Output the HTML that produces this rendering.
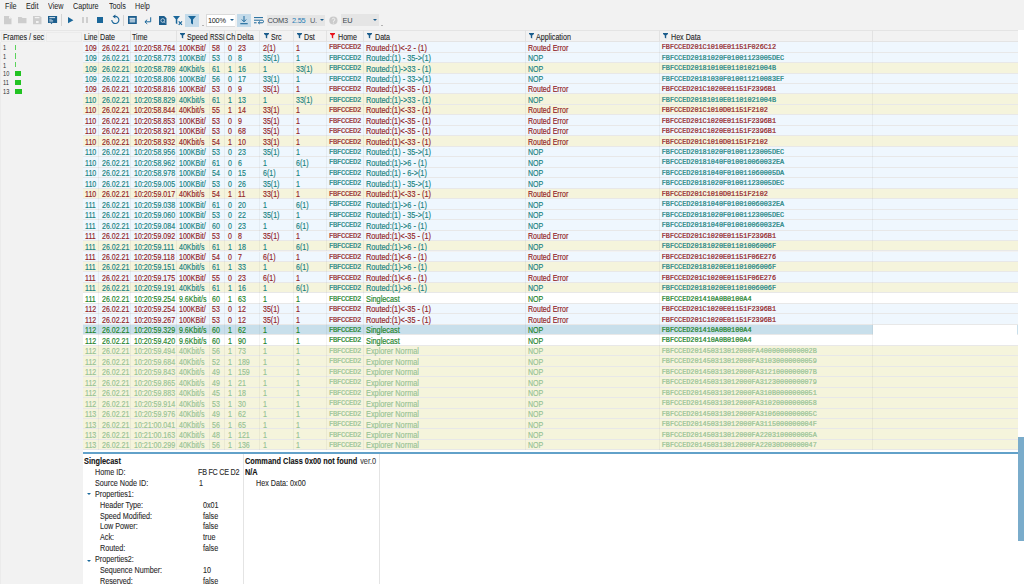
<!DOCTYPE html><html><head><meta charset="utf-8"><style>
html,body{margin:0;padding:0}
body{width:1024px;height:584px;overflow:hidden;background:#f2f2f2;position:relative;font-family:"Liberation Sans",sans-serif;color:#1e1e1e}
.a{position:absolute}
.menu{position:absolute;top:2.4px;font-size:8.4px;letter-spacing:0;line-height:9px;color:#1a1a1a;transform:scaleX(.86);transform-origin:0 0}
.tb svg{position:absolute;overflow:visible}
.tbl{position:absolute;left:82.5px;top:0;width:935px;height:584px}
.row{position:absolute;left:0;width:935px;height:10.47px;box-shadow:inset 0 -1px 0 #e8e8e8}
.c{position:absolute;top:0;height:10.47px;box-sizing:border-box;padding-left:2.4px;padding-top:1.5px;font-size:8.2px;letter-spacing:0;line-height:10.47px;white-space:nowrap;overflow:hidden;box-shadow:inset -1px 0 0 rgba(0,0,0,.045);-webkit-text-stroke:.16px currentColor}
.c>span{display:inline-block;transform:scaleX(.86);transform-origin:0 0}
.c.m>span{transform:none}
.c.d>span{transform:scaleX(.895)}
.c.m{font-family:"Liberation Mono",monospace;font-size:6.8px;letter-spacing:0;font-weight:normal;-webkit-text-stroke:.22px currentColor;padding-top:.2px;padding-left:1.6px}
.c.d{letter-spacing:0;padding-left:1.7px}
.c.m.h{-webkit-text-stroke:.2px currentColor;font-size:7.1px;letter-spacing:-0.27px}
.B{background:#eff7fe}
.Y{background:#f5f4dc}
.W{background:#ffffff}
.S{background:#c8dfeb}
.S .c:last-child{background:#fff}
.row .c:last-child{box-shadow:none}
.R{color:#932427}
.T{color:#198281}
.G{color:#22832a}
.F{color:#98c395}
.hdr{position:absolute;top:30px;height:12px;background:#f2f2f2;box-shadow:inset 0 1px 0 #e4e4e4, inset 0 -1px 0 #e4e4e4}
.hc{position:absolute;top:0;height:12px;box-sizing:border-box;font-size:8.2px;letter-spacing:0;-webkit-text-stroke:.1px currentColor;line-height:12px;padding-left:1px;padding-top:1.7px;white-space:nowrap;overflow:hidden;color:#1e1e1e;box-shadow:inset -1px 0 0 #e2e2e2}
.fi{display:inline-block;vertical-align:top;margin-top:1.7px}
.lp{position:absolute;left:0;top:30px;width:82.5px;height:554px;background:#f0f0f0}
.lrow{position:absolute;left:3.2px;margin-top:.8px;font-size:6.4px;line-height:8px;color:#2e2e2e;transform:scaleX(.88);transform-origin:0 0}
.bar{position:absolute;background:#22c322}
.det{position:absolute;left:82.5px;top:454px;width:935px;height:130px;background:#fff}
.dt{position:absolute;margin-top:.6px;font-size:8.2px;letter-spacing:0;transform:scaleX(.88);transform-origin:0 0;line-height:9px;color:#2a2a2a;white-space:nowrap;-webkit-text-stroke:.1px currentColor}
.dt.b{font-weight:bold;color:#111;transform:scaleX(.9)}

.hc>span{display:inline-block;transform:scaleX(.87);transform-origin:0 0;white-space:nowrap}

</style></head><body>
<div class="menu" style="left:5px">File</div>
<div class="menu" style="left:26.2px">Edit</div>
<div class="menu" style="left:47.8px">View</div>
<div class="menu" style="left:72.9px">Capture</div>
<div class="menu" style="left:109px">Tools</div>
<div class="menu" style="left:135.4px">Help</div>
<div class="a" style="left:0;top:30px;width:1024px;height:1px;background:#e6e6e6"></div>
<div class="tb">
<!-- new doc -->
<svg style="left:4px;top:16px" width="8" height="9" viewBox="0 0 8 9"><path d="M0 0H5L7.5 2.5V8.3H0Z" fill="#cdcdcd"/><path d="M5 0V2.5H7.5" fill="#f4f4f4"/></svg>
<!-- folder -->
<svg style="left:18px;top:17px" width="9" height="7" viewBox="0 0 9 7"><path d="M0 0H3.5L4.5 1H8.5V6.2H0Z" fill="#cdcdcd"/></svg>
<!-- save -->
<svg style="left:33px;top:16px" width="9" height="9" viewBox="0 0 9 9"><path d="M0 0H7L8.5 1.5V8.3H0Z" fill="#cdcdcd"/><rect x="1.8" y="1" width="4.6" height="1.2" fill="#f2f2f2"/><rect x="3" y="5" width="2.6" height="2" fill="#f2f2f2"/></svg>
<!-- message -->
<svg style="left:47.8px;top:15.8px" width="10" height="10" viewBox="0 0 10 10"><path d="M0 0H9.1V7H4.4L3.5 8.3L2.6 7H0Z" fill="#1c5d8c"/><rect x="1.3" y="1.2" width="5.8" height="0.9" fill="#eef3f7"/><rect x="1.3" y="2.9" width="2.4" height="0.8" fill="#aac4d8"/><rect x="1.3" y="4.2" width="3.8" height="0.8" fill="#aac4d8"/><rect x="1.3" y="5.4" width="3.8" height="0.8" fill="#aac4d8"/></svg>
<div class="a" style="left:60.6px;top:14px;width:1px;height:12px;background:#d4d4d4"></div>
<!-- play -->
<svg style="left:67.8px;top:17px" width="6" height="7" viewBox="0 0 6 7"><path d="M0 0L5.4 3.15L0 6.3Z" fill="#1b679a"/></svg>
<!-- pause -->
<div class="a" style="left:82px;top:17px;width:1.6px;height:6px;background:#cfcfcf"></div>
<div class="a" style="left:86px;top:17px;width:1.6px;height:6px;background:#cfcfcf"></div>
<!-- stop -->
<div class="a" style="left:97px;top:17.4px;width:5.5px;height:5.6px;background:#1b679a"></div>
<!-- refresh -->
<svg style="left:110px;top:14px" width="10" height="10" viewBox="0 0 10 10"><path d="M1.8 6A3.55 3.55 0 1 0 5.1 2.45" fill="none" stroke="#1b679a" stroke-width="1.15"/><path d="M2.6 2.45L5.4 0.5V4.4Z" fill="#1b5d8c"/></svg>
<div class="a" style="left:123px;top:14.6px;width:1px;height:11px;background:#d4d4d4"></div>
<!-- window -->
<svg style="left:128px;top:16px" width="9" height="8" viewBox="0 0 9 8"><rect x="0" y="0" width="8.8" height="8" fill="#1c5d8c"/><rect x="1.6" y="1.9" width="5.6" height="4.6" fill="#a3bfd4"/><rect x="1.6" y="1.9" width="5.6" height="0.7" fill="#e9f0f5"/></svg>
<!-- enter -->
<svg style="left:143.5px;top:16.5px" width="8" height="8" viewBox="0 0 8 8"><path d="M6.7 0.3V4.8H1" fill="none" stroke="#1b679a" stroke-width="1"/><path d="M3.2 2.7L0.9 4.8L3.2 6.9" fill="none" stroke="#1b679a" stroke-width="1"/></svg>
<!-- doc search -->
<svg style="left:158.5px;top:15.8px" width="8" height="9" viewBox="0 0 8 9"><path d="M0 0H5.2L7.5 2.3V9H0Z" fill="#1c5d8c"/><circle cx="3.75" cy="4.5" r="1.85" fill="none" stroke="#e8eff5" stroke-width="0.75"/><circle cx="3.75" cy="4.5" r="0.7" fill="#1c5d8c"/><path d="M4.9 5.7L6.3 7.2" stroke="#e8eff5" stroke-width="0.6"/></svg>
<!-- filter x -->
<svg style="left:172.7px;top:15.8px" width="10" height="10" viewBox="0 0 10 10"><path d="M0 0H7L4.3 3.2V8.2L2.8 7.3V3.2Z" fill="#1b679a"/><path d="M5.7 5.3L9 8.8M9 5.3L5.7 8.8" stroke="#1b679a" stroke-width="1.15"/></svg>
<!-- filter active -->
<div class="a" style="left:184.8px;top:13.5px;width:14.2px;height:13.2px;background:#c4dbea"></div>
<svg style="left:188px;top:16px" width="8" height="9" viewBox="0 0 8 9"><path d="M0 0H8L5 3.5V8.5L3 7.2V3.5Z" fill="#1b679a"/></svg>
<div class="a" style="left:202.3px;top:25px;width:0;height:0;border-left:1.3px solid transparent;border-right:1.3px solid transparent;border-top:1.3px solid #777"></div>
<!-- zoom combobox -->
<div class="a" style="left:206.2px;top:13.5px;width:29.3px;height:13.2px;background:#dadada"></div>
<div class="a" style="left:207px;top:14.6px;width:28px;height:11px;background:#fff"></div>
<div class="a" style="left:208px;top:15.6px;font-size:7.3px;letter-spacing:-0.25px;line-height:10px;color:#222">100%</div>
<div class="a" style="left:230px;top:19.2px;width:0;height:0;border-left:2px solid transparent;border-right:2px solid transparent;border-top:2px solid #1b5d8c"></div>
<!-- scroll to end active -->
<div class="a" style="left:236.6px;top:13.5px;width:14.1px;height:13.2px;background:#c4dbea"></div>
<svg style="left:239.5px;top:16px" width="8" height="9" viewBox="0 0 8 9"><path d="M4 0V5.5" stroke="#1b679a" stroke-width="1"/><path d="M1.8 3.5L4 5.8L6.2 3.5" fill="none" stroke="#1b679a" stroke-width="1"/><path d="M0.3 7.7H7.7" stroke="#1b679a" stroke-width="1.1"/></svg>
<!-- wrap -->
<svg style="left:254px;top:17px" width="10" height="7" viewBox="0 0 10 7"><path d="M0 0.6H9M0 3.2H8.2A1.3 1.3 0 0 1 8.2 5.8H4.6M0 5.8H2.6" fill="none" stroke="#1b679a" stroke-width="1"/><path d="M5.8 4.4L4.2 5.8L5.8 7" fill="none" stroke="#1b679a" stroke-width="0.9"/></svg>
<!-- COM box -->
<div class="a" style="left:266.7px;top:14.6px;width:58.3px;height:11px;background:#e5e5e5"></div>
<div class="a" style="left:267.5px;top:15.8px;font-size:7.4px;letter-spacing:-0.25px;line-height:10px;color:#3e4750;white-space:nowrap">COM3</div>
<div class="a" style="left:292px;top:15.8px;font-size:7.4px;letter-spacing:-0.25px;line-height:10px;color:#2a7db5">2.55</div>
<div class="a" style="left:310px;top:15.8px;font-size:7.4px;letter-spacing:-0.25px;line-height:10px;color:#5a6068">U.</div>
<div class="a" style="left:320px;top:19.2px;width:0;height:0;border-left:2px solid transparent;border-right:2px solid transparent;border-top:2px solid #1b5d8c"></div>
<!-- help -->
<svg style="left:329px;top:16px" width="9" height="9" viewBox="0 0 9 9"><circle cx="4.4" cy="4.5" r="4.1" fill="#cbcbcb"/><path d="M3.1 3.4A1.35 1.35 0 1 1 4.4 5V5.8" fill="none" stroke="#f4f4f4" stroke-width="0.9"/><circle cx="4.4" cy="7" r="0.55" fill="#f4f4f4"/></svg>
<!-- EU box -->
<div class="a" style="left:341.3px;top:13.9px;width:37.5px;height:11.7px;background:#e5e5e5"></div>
<div class="a" style="left:342.5px;top:15.8px;font-size:7.4px;letter-spacing:-0.25px;line-height:10px;color:#3e4750">EU</div>
<div class="a" style="left:373px;top:19.2px;width:0;height:0;border-left:2px solid transparent;border-right:2px solid transparent;border-top:2px solid #1b5d8c"></div>
<div class="a" style="left:381.2px;top:25px;width:0;height:0;border-left:1.3px solid transparent;border-right:1.3px solid transparent;border-top:1.3px solid #777"></div>
</div>
<!-- left panel -->
<div class="a" style="left:0;top:42px;width:1px;height:542px;background:#ebebeb"></div>
<div class="a" style="left:1px;top:31.5px;width:43.5px;height:10.5px;background:#f2f2f2;box-shadow:inset 0 0 0 1px #ebebeb"></div>
<div class="a" style="left:45.5px;top:31.5px;width:36px;height:10.5px;background:#f2f2f2;box-shadow:inset 0 0 0 1px #ebebeb"></div>
<div class="a" style="left:3.2px;top:32.9px;font-size:8.2px;letter-spacing:0;line-height:10px;color:#1e1e1e;-webkit-text-stroke:.08px currentColor;transform:scaleX(.87);transform-origin:0 0">Frames / sec</div>
<div class="lrow" style="top:43.2px">1</div><div class="bar" style="left:15.1px;top:44.9px;width:1px;height:5px;background:#5bd35b"></div>
<div class="lrow" style="top:52px">1</div><div class="bar" style="left:15.1px;top:53.4px;width:1px;height:5.4px;background:#5bd35b"></div>
<div class="lrow" style="top:60.9px">1</div><div class="bar" style="left:15.1px;top:62.4px;width:1px;height:5px;background:#5bd35b"></div>
<div class="lrow" style="top:69.7px">10</div><div class="bar" style="left:15.3px;top:71px;width:5.6px;height:5px"></div>
<div class="lrow" style="top:78.6px">11</div><div class="bar" style="left:15.3px;top:79.9px;width:5.9px;height:5.2px"></div>
<div class="lrow" style="top:87.4px">13</div><div class="bar" style="left:15.3px;top:88.7px;width:7.2px;height:5.5px"></div>

<div class="hdr" style="left:82.5px;width:935px">
<div class="hc" style="left:0.00px;width:16.80px"><span>Line</span></div>
<div class="hc" style="left:16.80px;width:32.00px"><span>Date</span></div>
<div class="hc" style="left:48.80px;width:45.40px"><span>Time</span></div>
<div class="hc" style="left:94.20px;width:33.20px"><svg class="fi" width="5" height="6" viewBox="0 0 5 6" style="margin-left:2px;margin-right:2.6px"><path d="M0 0H5V1L3.2 2.6V5.6L1.8 4.8V2.6L0 1Z" fill="#1b5d8c"/></svg><span>Speed</span></div>
<div class="hc" style="left:127.40px;width:15.30px;padding-left:0.5px;overflow:visible"><span style="transform:scaleX(.76)">RSSI</span></div>
<div class="hc" style="left:142.70px;width:10.90px"><span>Ch</span></div>
<div class="hc" style="left:153.60px;width:24.40px"><span>Delta</span></div>
<div class="hc" style="left:178.00px;width:33.20px"><svg class="fi" width="5" height="6" viewBox="0 0 5 6" style="margin-left:2px;margin-right:2.6px"><path d="M0 0H5V1L3.2 2.6V5.6L1.8 4.8V2.6L0 1Z" fill="#1b5d8c"/></svg><span>Src</span></div>
<div class="hc" style="left:211.20px;width:33.70px"><svg class="fi" width="5" height="6" viewBox="0 0 5 6" style="margin-left:2px;margin-right:2.6px"><path d="M0 0H5V1L3.2 2.6V5.6L1.8 4.8V2.6L0 1Z" fill="#1b5d8c"/></svg><span>Dst</span></div>
<div class="hc" style="left:244.90px;width:36.80px"><svg class="fi" width="5" height="6" viewBox="0 0 5 6" style="margin-left:2px;margin-right:2.6px"><path d="M0 0H5V1L3.2 2.6V5.6L1.8 4.8V2.6L0 1Z" fill="#e8121a"/></svg><span>Home</span></div>
<div class="hc" style="left:281.70px;width:161.40px"><svg class="fi" width="5" height="6" viewBox="0 0 5 6" style="margin-left:2px;margin-right:2.6px"><path d="M0 0H5V1L3.2 2.6V5.6L1.8 4.8V2.6L0 1Z" fill="#1b5d8c"/></svg><span>Data</span></div>
<div class="hc" style="left:443.10px;width:134.60px"><svg class="fi" width="5" height="6" viewBox="0 0 5 6" style="margin-left:2px;margin-right:2.6px"><path d="M0 0H5V1L3.2 2.6V5.6L1.8 4.8V2.6L0 1Z" fill="#1b5d8c"/></svg><span>Application</span></div>
<div class="hc" style="left:577.70px;width:213.20px"><svg class="fi" width="5" height="6" viewBox="0 0 5 6" style="margin-left:2px;margin-right:2.6px"><path d="M0 0H5V1L3.2 2.6V5.6L1.8 4.8V2.6L0 1Z" fill="#1b5d8c"/></svg><span>Hex Data</span></div>
<div class="hc" style="left:790.90px;width:144.10px;box-shadow:none"><span></span></div>
</div>
<div class="tbl">
<div class="row B R" style="top:42.100px">
<div class="c" style="left:0.00px;width:16.80px"><span>109</span></div>
<div class="c" style="left:16.80px;width:32.00px"><span>26.02.21</span></div>
<div class="c" style="left:48.80px;width:45.40px"><span>10:20:58.764</span></div>
<div class="c" style="left:94.20px;width:33.20px"><span>100KBit/</span></div>
<div class="c" style="left:127.40px;width:15.30px"><span>58</span></div>
<div class="c" style="left:142.70px;width:10.90px"><span>0</span></div>
<div class="c" style="left:153.60px;width:24.40px"><span>23</span></div>
<div class="c" style="left:178.00px;width:33.20px"><span>2(1)</span></div>
<div class="c" style="left:211.20px;width:33.70px"><span>1</span></div>
<div class="c m h" style="left:244.90px;width:36.80px"><span>FBFCCED2</span></div>
<div class="c d" style="left:281.70px;width:161.40px"><span>Routed:(1)&lt;-2 - (1)</span></div>
<div class="c" style="left:443.10px;width:134.60px"><span>Routed Error</span></div>
<div class="c m" style="left:577.70px;width:213.20px"><span>FBFCCED201C1010E01151F026C12</span></div>
<div class="c" style="left:790.90px;width:144.10px"></div>
</div>
<div class="row B T" style="top:52.570px">
<div class="c" style="left:0.00px;width:16.80px"><span>109</span></div>
<div class="c" style="left:16.80px;width:32.00px"><span>26.02.21</span></div>
<div class="c" style="left:48.80px;width:45.40px"><span>10:20:58.773</span></div>
<div class="c" style="left:94.20px;width:33.20px"><span>100KBit/</span></div>
<div class="c" style="left:127.40px;width:15.30px"><span>53</span></div>
<div class="c" style="left:142.70px;width:10.90px"><span>0</span></div>
<div class="c" style="left:153.60px;width:24.40px"><span>8</span></div>
<div class="c" style="left:178.00px;width:33.20px"><span>35(1)</span></div>
<div class="c" style="left:211.20px;width:33.70px"><span>1</span></div>
<div class="c m h" style="left:244.90px;width:36.80px"><span>FBFCCED2</span></div>
<div class="c d" style="left:281.70px;width:161.40px"><span>Routed:(1) - 35-&gt;(1)</span></div>
<div class="c" style="left:443.10px;width:134.60px"><span>NOP</span></div>
<div class="c m" style="left:577.70px;width:213.20px"><span>FBFCCED20181020F01001123005DEC</span></div>
<div class="c" style="left:790.90px;width:144.10px"></div>
</div>
<div class="row Y T" style="top:63.040px">
<div class="c" style="left:0.00px;width:16.80px"><span>109</span></div>
<div class="c" style="left:16.80px;width:32.00px"><span>26.02.21</span></div>
<div class="c" style="left:48.80px;width:45.40px"><span>10:20:58.789</span></div>
<div class="c" style="left:94.20px;width:33.20px"><span>40Kbit/s</span></div>
<div class="c" style="left:127.40px;width:15.30px"><span>61</span></div>
<div class="c" style="left:142.70px;width:10.90px"><span>1</span></div>
<div class="c" style="left:153.60px;width:24.40px"><span>16</span></div>
<div class="c" style="left:178.00px;width:33.20px"><span>1</span></div>
<div class="c" style="left:211.20px;width:33.70px"><span>33(1)</span></div>
<div class="c m h" style="left:244.90px;width:36.80px"><span>FBFCCED2</span></div>
<div class="c d" style="left:281.70px;width:161.40px"><span>Routed:(1)-&gt;33 - (1)</span></div>
<div class="c" style="left:443.10px;width:134.60px"><span>NOP</span></div>
<div class="c m" style="left:577.70px;width:213.20px"><span>FBFCCED20181010E01101021004B</span></div>
<div class="c" style="left:790.90px;width:144.10px"></div>
</div>
<div class="row B T" style="top:73.510px">
<div class="c" style="left:0.00px;width:16.80px"><span>109</span></div>
<div class="c" style="left:16.80px;width:32.00px"><span>26.02.21</span></div>
<div class="c" style="left:48.80px;width:45.40px"><span>10:20:58.806</span></div>
<div class="c" style="left:94.20px;width:33.20px"><span>100KBit/</span></div>
<div class="c" style="left:127.40px;width:15.30px"><span>56</span></div>
<div class="c" style="left:142.70px;width:10.90px"><span>0</span></div>
<div class="c" style="left:153.60px;width:24.40px"><span>17</span></div>
<div class="c" style="left:178.00px;width:33.20px"><span>33(1)</span></div>
<div class="c" style="left:211.20px;width:33.70px"><span>1</span></div>
<div class="c m h" style="left:244.90px;width:36.80px"><span>FBFCCED2</span></div>
<div class="c d" style="left:281.70px;width:161.40px"><span>Routed:(1) - 33-&gt;(1)</span></div>
<div class="c" style="left:443.10px;width:134.60px"><span>NOP</span></div>
<div class="c m" style="left:577.70px;width:213.20px"><span>FBFCCED20181030F010011210083EF</span></div>
<div class="c" style="left:790.90px;width:144.10px"></div>
</div>
<div class="row B R" style="top:83.980px">
<div class="c" style="left:0.00px;width:16.80px"><span>109</span></div>
<div class="c" style="left:16.80px;width:32.00px"><span>26.02.21</span></div>
<div class="c" style="left:48.80px;width:45.40px"><span>10:20:58.816</span></div>
<div class="c" style="left:94.20px;width:33.20px"><span>100KBit/</span></div>
<div class="c" style="left:127.40px;width:15.30px"><span>53</span></div>
<div class="c" style="left:142.70px;width:10.90px"><span>0</span></div>
<div class="c" style="left:153.60px;width:24.40px"><span>9</span></div>
<div class="c" style="left:178.00px;width:33.20px"><span>35(1)</span></div>
<div class="c" style="left:211.20px;width:33.70px"><span>1</span></div>
<div class="c m h" style="left:244.90px;width:36.80px"><span>FBFCCED2</span></div>
<div class="c d" style="left:281.70px;width:161.40px"><span>Routed:(1)&lt;-35 - (1)</span></div>
<div class="c" style="left:443.10px;width:134.60px"><span>Routed Error</span></div>
<div class="c m" style="left:577.70px;width:213.20px"><span>FBFCCED201C1020E01151F2396B1</span></div>
<div class="c" style="left:790.90px;width:144.10px"></div>
</div>
<div class="row Y T" style="top:94.450px">
<div class="c" style="left:0.00px;width:16.80px"><span>110</span></div>
<div class="c" style="left:16.80px;width:32.00px"><span>26.02.21</span></div>
<div class="c" style="left:48.80px;width:45.40px"><span>10:20:58.829</span></div>
<div class="c" style="left:94.20px;width:33.20px"><span>40Kbit/s</span></div>
<div class="c" style="left:127.40px;width:15.30px"><span>61</span></div>
<div class="c" style="left:142.70px;width:10.90px"><span>1</span></div>
<div class="c" style="left:153.60px;width:24.40px"><span>13</span></div>
<div class="c" style="left:178.00px;width:33.20px"><span>1</span></div>
<div class="c" style="left:211.20px;width:33.70px"><span>33(1)</span></div>
<div class="c m h" style="left:244.90px;width:36.80px"><span>FBFCCED2</span></div>
<div class="c d" style="left:281.70px;width:161.40px"><span>Routed:(1)-&gt;33 - (1)</span></div>
<div class="c" style="left:443.10px;width:134.60px"><span>NOP</span></div>
<div class="c m" style="left:577.70px;width:213.20px"><span>FBFCCED20181010E01101021004B</span></div>
<div class="c" style="left:790.90px;width:144.10px"></div>
</div>
<div class="row Y R" style="top:104.920px">
<div class="c" style="left:0.00px;width:16.80px"><span>110</span></div>
<div class="c" style="left:16.80px;width:32.00px"><span>26.02.21</span></div>
<div class="c" style="left:48.80px;width:45.40px"><span>10:20:58.844</span></div>
<div class="c" style="left:94.20px;width:33.20px"><span>40Kbit/s</span></div>
<div class="c" style="left:127.40px;width:15.30px"><span>55</span></div>
<div class="c" style="left:142.70px;width:10.90px"><span>1</span></div>
<div class="c" style="left:153.60px;width:24.40px"><span>14</span></div>
<div class="c" style="left:178.00px;width:33.20px"><span>33(1)</span></div>
<div class="c" style="left:211.20px;width:33.70px"><span>1</span></div>
<div class="c m h" style="left:244.90px;width:36.80px"><span>FBFCCED2</span></div>
<div class="c d" style="left:281.70px;width:161.40px"><span>Routed:(1)&lt;-33 - (1)</span></div>
<div class="c" style="left:443.10px;width:134.60px"><span>Routed Error</span></div>
<div class="c m" style="left:577.70px;width:213.20px"><span>FBFCCED201C1010D01151F2102</span></div>
<div class="c" style="left:790.90px;width:144.10px"></div>
</div>
<div class="row B R" style="top:115.390px">
<div class="c" style="left:0.00px;width:16.80px"><span>110</span></div>
<div class="c" style="left:16.80px;width:32.00px"><span>26.02.21</span></div>
<div class="c" style="left:48.80px;width:45.40px"><span>10:20:58.853</span></div>
<div class="c" style="left:94.20px;width:33.20px"><span>100KBit/</span></div>
<div class="c" style="left:127.40px;width:15.30px"><span>53</span></div>
<div class="c" style="left:142.70px;width:10.90px"><span>0</span></div>
<div class="c" style="left:153.60px;width:24.40px"><span>9</span></div>
<div class="c" style="left:178.00px;width:33.20px"><span>35(1)</span></div>
<div class="c" style="left:211.20px;width:33.70px"><span>1</span></div>
<div class="c m h" style="left:244.90px;width:36.80px"><span>FBFCCED2</span></div>
<div class="c d" style="left:281.70px;width:161.40px"><span>Routed:(1)&lt;-35 - (1)</span></div>
<div class="c" style="left:443.10px;width:134.60px"><span>Routed Error</span></div>
<div class="c m" style="left:577.70px;width:213.20px"><span>FBFCCED201C1020E01151F2396B1</span></div>
<div class="c" style="left:790.90px;width:144.10px"></div>
</div>
<div class="row B R" style="top:125.860px">
<div class="c" style="left:0.00px;width:16.80px"><span>110</span></div>
<div class="c" style="left:16.80px;width:32.00px"><span>26.02.21</span></div>
<div class="c" style="left:48.80px;width:45.40px"><span>10:20:58.921</span></div>
<div class="c" style="left:94.20px;width:33.20px"><span>100KBit/</span></div>
<div class="c" style="left:127.40px;width:15.30px"><span>53</span></div>
<div class="c" style="left:142.70px;width:10.90px"><span>0</span></div>
<div class="c" style="left:153.60px;width:24.40px"><span>68</span></div>
<div class="c" style="left:178.00px;width:33.20px"><span>35(1)</span></div>
<div class="c" style="left:211.20px;width:33.70px"><span>1</span></div>
<div class="c m h" style="left:244.90px;width:36.80px"><span>FBFCCED2</span></div>
<div class="c d" style="left:281.70px;width:161.40px"><span>Routed:(1)&lt;-35 - (1)</span></div>
<div class="c" style="left:443.10px;width:134.60px"><span>Routed Error</span></div>
<div class="c m" style="left:577.70px;width:213.20px"><span>FBFCCED201C1020E01151F2396B1</span></div>
<div class="c" style="left:790.90px;width:144.10px"></div>
</div>
<div class="row Y R" style="top:136.330px">
<div class="c" style="left:0.00px;width:16.80px"><span>110</span></div>
<div class="c" style="left:16.80px;width:32.00px"><span>26.02.21</span></div>
<div class="c" style="left:48.80px;width:45.40px"><span>10:20:58.932</span></div>
<div class="c" style="left:94.20px;width:33.20px"><span>40Kbit/s</span></div>
<div class="c" style="left:127.40px;width:15.30px"><span>54</span></div>
<div class="c" style="left:142.70px;width:10.90px"><span>1</span></div>
<div class="c" style="left:153.60px;width:24.40px"><span>10</span></div>
<div class="c" style="left:178.00px;width:33.20px"><span>33(1)</span></div>
<div class="c" style="left:211.20px;width:33.70px"><span>1</span></div>
<div class="c m h" style="left:244.90px;width:36.80px"><span>FBFCCED2</span></div>
<div class="c d" style="left:281.70px;width:161.40px"><span>Routed:(1)&lt;-33 - (1)</span></div>
<div class="c" style="left:443.10px;width:134.60px"><span>Routed Error</span></div>
<div class="c m" style="left:577.70px;width:213.20px"><span>FBFCCED201C1010D01151F2102</span></div>
<div class="c" style="left:790.90px;width:144.10px"></div>
</div>
<div class="row B T" style="top:146.800px">
<div class="c" style="left:0.00px;width:16.80px"><span>110</span></div>
<div class="c" style="left:16.80px;width:32.00px"><span>26.02.21</span></div>
<div class="c" style="left:48.80px;width:45.40px"><span>10:20:58.956</span></div>
<div class="c" style="left:94.20px;width:33.20px"><span>100KBit/</span></div>
<div class="c" style="left:127.40px;width:15.30px"><span>53</span></div>
<div class="c" style="left:142.70px;width:10.90px"><span>0</span></div>
<div class="c" style="left:153.60px;width:24.40px"><span>23</span></div>
<div class="c" style="left:178.00px;width:33.20px"><span>35(1)</span></div>
<div class="c" style="left:211.20px;width:33.70px"><span>1</span></div>
<div class="c m h" style="left:244.90px;width:36.80px"><span>FBFCCED2</span></div>
<div class="c d" style="left:281.70px;width:161.40px"><span>Routed:(1) - 35-&gt;(1)</span></div>
<div class="c" style="left:443.10px;width:134.60px"><span>NOP</span></div>
<div class="c m" style="left:577.70px;width:213.20px"><span>FBFCCED20181020F01001123005DEC</span></div>
<div class="c" style="left:790.90px;width:144.10px"></div>
</div>
<div class="row B T" style="top:157.270px">
<div class="c" style="left:0.00px;width:16.80px"><span>110</span></div>
<div class="c" style="left:16.80px;width:32.00px"><span>26.02.21</span></div>
<div class="c" style="left:48.80px;width:45.40px"><span>10:20:58.962</span></div>
<div class="c" style="left:94.20px;width:33.20px"><span>100KBit/</span></div>
<div class="c" style="left:127.40px;width:15.30px"><span>61</span></div>
<div class="c" style="left:142.70px;width:10.90px"><span>0</span></div>
<div class="c" style="left:153.60px;width:24.40px"><span>6</span></div>
<div class="c" style="left:178.00px;width:33.20px"><span>1</span></div>
<div class="c" style="left:211.20px;width:33.70px"><span>6(1)</span></div>
<div class="c m h" style="left:244.90px;width:36.80px"><span>FBFCCED2</span></div>
<div class="c d" style="left:281.70px;width:161.40px"><span>Routed:(1)-&gt;6 - (1)</span></div>
<div class="c" style="left:443.10px;width:134.60px"><span>NOP</span></div>
<div class="c m" style="left:577.70px;width:213.20px"><span>FBFCCED20181040F010010060032EA</span></div>
<div class="c" style="left:790.90px;width:144.10px"></div>
</div>
<div class="row B T" style="top:167.740px">
<div class="c" style="left:0.00px;width:16.80px"><span>110</span></div>
<div class="c" style="left:16.80px;width:32.00px"><span>26.02.21</span></div>
<div class="c" style="left:48.80px;width:45.40px"><span>10:20:58.978</span></div>
<div class="c" style="left:94.20px;width:33.20px"><span>100KBit/</span></div>
<div class="c" style="left:127.40px;width:15.30px"><span>54</span></div>
<div class="c" style="left:142.70px;width:10.90px"><span>0</span></div>
<div class="c" style="left:153.60px;width:24.40px"><span>15</span></div>
<div class="c" style="left:178.00px;width:33.20px"><span>6(1)</span></div>
<div class="c" style="left:211.20px;width:33.70px"><span>1</span></div>
<div class="c m h" style="left:244.90px;width:36.80px"><span>FBFCCED2</span></div>
<div class="c d" style="left:281.70px;width:161.40px"><span>Routed:(1) - 6-&gt;(1)</span></div>
<div class="c" style="left:443.10px;width:134.60px"><span>NOP</span></div>
<div class="c m" style="left:577.70px;width:213.20px"><span>FBFCCED20181040F010011060005DA</span></div>
<div class="c" style="left:790.90px;width:144.10px"></div>
</div>
<div class="row B T" style="top:178.210px">
<div class="c" style="left:0.00px;width:16.80px"><span>110</span></div>
<div class="c" style="left:16.80px;width:32.00px"><span>26.02.21</span></div>
<div class="c" style="left:48.80px;width:45.40px"><span>10:20:59.005</span></div>
<div class="c" style="left:94.20px;width:33.20px"><span>100KBit/</span></div>
<div class="c" style="left:127.40px;width:15.30px"><span>53</span></div>
<div class="c" style="left:142.70px;width:10.90px"><span>0</span></div>
<div class="c" style="left:153.60px;width:24.40px"><span>26</span></div>
<div class="c" style="left:178.00px;width:33.20px"><span>35(1)</span></div>
<div class="c" style="left:211.20px;width:33.70px"><span>1</span></div>
<div class="c m h" style="left:244.90px;width:36.80px"><span>FBFCCED2</span></div>
<div class="c d" style="left:281.70px;width:161.40px"><span>Routed:(1) - 35-&gt;(1)</span></div>
<div class="c" style="left:443.10px;width:134.60px"><span>NOP</span></div>
<div class="c m" style="left:577.70px;width:213.20px"><span>FBFCCED20181020F01001123005DEC</span></div>
<div class="c" style="left:790.90px;width:144.10px"></div>
</div>
<div class="row Y R" style="top:188.680px">
<div class="c" style="left:0.00px;width:16.80px"><span>110</span></div>
<div class="c" style="left:16.80px;width:32.00px"><span>26.02.21</span></div>
<div class="c" style="left:48.80px;width:45.40px"><span>10:20:59.017</span></div>
<div class="c" style="left:94.20px;width:33.20px"><span>40Kbit/s</span></div>
<div class="c" style="left:127.40px;width:15.30px"><span>54</span></div>
<div class="c" style="left:142.70px;width:10.90px"><span>1</span></div>
<div class="c" style="left:153.60px;width:24.40px"><span>11</span></div>
<div class="c" style="left:178.00px;width:33.20px"><span>33(1)</span></div>
<div class="c" style="left:211.20px;width:33.70px"><span>1</span></div>
<div class="c m h" style="left:244.90px;width:36.80px"><span>FBFCCED2</span></div>
<div class="c d" style="left:281.70px;width:161.40px"><span>Routed:(1)&lt;-33 - (1)</span></div>
<div class="c" style="left:443.10px;width:134.60px"><span>Routed Error</span></div>
<div class="c m" style="left:577.70px;width:213.20px"><span>FBFCCED201C1010D01151F2102</span></div>
<div class="c" style="left:790.90px;width:144.10px"></div>
</div>
<div class="row B T" style="top:199.150px">
<div class="c" style="left:0.00px;width:16.80px"><span>111</span></div>
<div class="c" style="left:16.80px;width:32.00px"><span>26.02.21</span></div>
<div class="c" style="left:48.80px;width:45.40px"><span>10:20:59.038</span></div>
<div class="c" style="left:94.20px;width:33.20px"><span>100KBit/</span></div>
<div class="c" style="left:127.40px;width:15.30px"><span>61</span></div>
<div class="c" style="left:142.70px;width:10.90px"><span>0</span></div>
<div class="c" style="left:153.60px;width:24.40px"><span>20</span></div>
<div class="c" style="left:178.00px;width:33.20px"><span>1</span></div>
<div class="c" style="left:211.20px;width:33.70px"><span>6(1)</span></div>
<div class="c m h" style="left:244.90px;width:36.80px"><span>FBFCCED2</span></div>
<div class="c d" style="left:281.70px;width:161.40px"><span>Routed:(1)-&gt;6 - (1)</span></div>
<div class="c" style="left:443.10px;width:134.60px"><span>NOP</span></div>
<div class="c m" style="left:577.70px;width:213.20px"><span>FBFCCED20181040F010010060032EA</span></div>
<div class="c" style="left:790.90px;width:144.10px"></div>
</div>
<div class="row B T" style="top:209.620px">
<div class="c" style="left:0.00px;width:16.80px"><span>111</span></div>
<div class="c" style="left:16.80px;width:32.00px"><span>26.02.21</span></div>
<div class="c" style="left:48.80px;width:45.40px"><span>10:20:59.060</span></div>
<div class="c" style="left:94.20px;width:33.20px"><span>100KBit/</span></div>
<div class="c" style="left:127.40px;width:15.30px"><span>53</span></div>
<div class="c" style="left:142.70px;width:10.90px"><span>0</span></div>
<div class="c" style="left:153.60px;width:24.40px"><span>22</span></div>
<div class="c" style="left:178.00px;width:33.20px"><span>35(1)</span></div>
<div class="c" style="left:211.20px;width:33.70px"><span>1</span></div>
<div class="c m h" style="left:244.90px;width:36.80px"><span>FBFCCED2</span></div>
<div class="c d" style="left:281.70px;width:161.40px"><span>Routed:(1) - 35-&gt;(1)</span></div>
<div class="c" style="left:443.10px;width:134.60px"><span>NOP</span></div>
<div class="c m" style="left:577.70px;width:213.20px"><span>FBFCCED20181020F01001123005DEC</span></div>
<div class="c" style="left:790.90px;width:144.10px"></div>
</div>
<div class="row B T" style="top:220.090px">
<div class="c" style="left:0.00px;width:16.80px"><span>111</span></div>
<div class="c" style="left:16.80px;width:32.00px"><span>26.02.21</span></div>
<div class="c" style="left:48.80px;width:45.40px"><span>10:20:59.084</span></div>
<div class="c" style="left:94.20px;width:33.20px"><span>100KBit/</span></div>
<div class="c" style="left:127.40px;width:15.30px"><span>60</span></div>
<div class="c" style="left:142.70px;width:10.90px"><span>0</span></div>
<div class="c" style="left:153.60px;width:24.40px"><span>23</span></div>
<div class="c" style="left:178.00px;width:33.20px"><span>1</span></div>
<div class="c" style="left:211.20px;width:33.70px"><span>6(1)</span></div>
<div class="c m h" style="left:244.90px;width:36.80px"><span>FBFCCED2</span></div>
<div class="c d" style="left:281.70px;width:161.40px"><span>Routed:(1)-&gt;6 - (1)</span></div>
<div class="c" style="left:443.10px;width:134.60px"><span>NOP</span></div>
<div class="c m" style="left:577.70px;width:213.20px"><span>FBFCCED20181040F010010060032EA</span></div>
<div class="c" style="left:790.90px;width:144.10px"></div>
</div>
<div class="row B R" style="top:230.560px">
<div class="c" style="left:0.00px;width:16.80px"><span>111</span></div>
<div class="c" style="left:16.80px;width:32.00px"><span>26.02.21</span></div>
<div class="c" style="left:48.80px;width:45.40px"><span>10:20:59.092</span></div>
<div class="c" style="left:94.20px;width:33.20px"><span>100KBit/</span></div>
<div class="c" style="left:127.40px;width:15.30px"><span>53</span></div>
<div class="c" style="left:142.70px;width:10.90px"><span>0</span></div>
<div class="c" style="left:153.60px;width:24.40px"><span>8</span></div>
<div class="c" style="left:178.00px;width:33.20px"><span>35(1)</span></div>
<div class="c" style="left:211.20px;width:33.70px"><span>1</span></div>
<div class="c m h" style="left:244.90px;width:36.80px"><span>FBFCCED2</span></div>
<div class="c d" style="left:281.70px;width:161.40px"><span>Routed:(1)&lt;-35 - (1)</span></div>
<div class="c" style="left:443.10px;width:134.60px"><span>Routed Error</span></div>
<div class="c m" style="left:577.70px;width:213.20px"><span>FBFCCED201C1020E01151F2396B1</span></div>
<div class="c" style="left:790.90px;width:144.10px"></div>
</div>
<div class="row Y T" style="top:241.030px">
<div class="c" style="left:0.00px;width:16.80px"><span>111</span></div>
<div class="c" style="left:16.80px;width:32.00px"><span>26.02.21</span></div>
<div class="c" style="left:48.80px;width:45.40px"><span>10:20:59.111</span></div>
<div class="c" style="left:94.20px;width:33.20px"><span>40Kbit/s</span></div>
<div class="c" style="left:127.40px;width:15.30px"><span>61</span></div>
<div class="c" style="left:142.70px;width:10.90px"><span>1</span></div>
<div class="c" style="left:153.60px;width:24.40px"><span>18</span></div>
<div class="c" style="left:178.00px;width:33.20px"><span>1</span></div>
<div class="c" style="left:211.20px;width:33.70px"><span>6(1)</span></div>
<div class="c m h" style="left:244.90px;width:36.80px"><span>FBFCCED2</span></div>
<div class="c d" style="left:281.70px;width:161.40px"><span>Routed:(1)-&gt;6 - (1)</span></div>
<div class="c" style="left:443.10px;width:134.60px"><span>NOP</span></div>
<div class="c m" style="left:577.70px;width:213.20px"><span>FBFCCED20181020E01101006006F</span></div>
<div class="c" style="left:790.90px;width:144.10px"></div>
</div>
<div class="row B R" style="top:251.500px">
<div class="c" style="left:0.00px;width:16.80px"><span>111</span></div>
<div class="c" style="left:16.80px;width:32.00px"><span>26.02.21</span></div>
<div class="c" style="left:48.80px;width:45.40px"><span>10:20:59.118</span></div>
<div class="c" style="left:94.20px;width:33.20px"><span>100KBit/</span></div>
<div class="c" style="left:127.40px;width:15.30px"><span>54</span></div>
<div class="c" style="left:142.70px;width:10.90px"><span>0</span></div>
<div class="c" style="left:153.60px;width:24.40px"><span>7</span></div>
<div class="c" style="left:178.00px;width:33.20px"><span>6(1)</span></div>
<div class="c" style="left:211.20px;width:33.70px"><span>1</span></div>
<div class="c m h" style="left:244.90px;width:36.80px"><span>FBFCCED2</span></div>
<div class="c d" style="left:281.70px;width:161.40px"><span>Routed:(1)&lt;-6 - (1)</span></div>
<div class="c" style="left:443.10px;width:134.60px"><span>Routed Error</span></div>
<div class="c m" style="left:577.70px;width:213.20px"><span>FBFCCED201C1020E01151F06E276</span></div>
<div class="c" style="left:790.90px;width:144.10px"></div>
</div>
<div class="row Y T" style="top:261.970px">
<div class="c" style="left:0.00px;width:16.80px"><span>111</span></div>
<div class="c" style="left:16.80px;width:32.00px"><span>26.02.21</span></div>
<div class="c" style="left:48.80px;width:45.40px"><span>10:20:59.151</span></div>
<div class="c" style="left:94.20px;width:33.20px"><span>40Kbit/s</span></div>
<div class="c" style="left:127.40px;width:15.30px"><span>61</span></div>
<div class="c" style="left:142.70px;width:10.90px"><span>1</span></div>
<div class="c" style="left:153.60px;width:24.40px"><span>33</span></div>
<div class="c" style="left:178.00px;width:33.20px"><span>1</span></div>
<div class="c" style="left:211.20px;width:33.70px"><span>6(1)</span></div>
<div class="c m h" style="left:244.90px;width:36.80px"><span>FBFCCED2</span></div>
<div class="c d" style="left:281.70px;width:161.40px"><span>Routed:(1)-&gt;6 - (1)</span></div>
<div class="c" style="left:443.10px;width:134.60px"><span>NOP</span></div>
<div class="c m" style="left:577.70px;width:213.20px"><span>FBFCCED20181020E01101006006F</span></div>
<div class="c" style="left:790.90px;width:144.10px"></div>
</div>
<div class="row B R" style="top:272.440px">
<div class="c" style="left:0.00px;width:16.80px"><span>111</span></div>
<div class="c" style="left:16.80px;width:32.00px"><span>26.02.21</span></div>
<div class="c" style="left:48.80px;width:45.40px"><span>10:20:59.175</span></div>
<div class="c" style="left:94.20px;width:33.20px"><span>100KBit/</span></div>
<div class="c" style="left:127.40px;width:15.30px"><span>55</span></div>
<div class="c" style="left:142.70px;width:10.90px"><span>0</span></div>
<div class="c" style="left:153.60px;width:24.40px"><span>23</span></div>
<div class="c" style="left:178.00px;width:33.20px"><span>6(1)</span></div>
<div class="c" style="left:211.20px;width:33.70px"><span>1</span></div>
<div class="c m h" style="left:244.90px;width:36.80px"><span>FBFCCED2</span></div>
<div class="c d" style="left:281.70px;width:161.40px"><span>Routed:(1)&lt;-6 - (1)</span></div>
<div class="c" style="left:443.10px;width:134.60px"><span>Routed Error</span></div>
<div class="c m" style="left:577.70px;width:213.20px"><span>FBFCCED201C1020E01151F06E276</span></div>
<div class="c" style="left:790.90px;width:144.10px"></div>
</div>
<div class="row Y T" style="top:282.910px">
<div class="c" style="left:0.00px;width:16.80px"><span>111</span></div>
<div class="c" style="left:16.80px;width:32.00px"><span>26.02.21</span></div>
<div class="c" style="left:48.80px;width:45.40px"><span>10:20:59.191</span></div>
<div class="c" style="left:94.20px;width:33.20px"><span>40Kbit/s</span></div>
<div class="c" style="left:127.40px;width:15.30px"><span>61</span></div>
<div class="c" style="left:142.70px;width:10.90px"><span>1</span></div>
<div class="c" style="left:153.60px;width:24.40px"><span>16</span></div>
<div class="c" style="left:178.00px;width:33.20px"><span>1</span></div>
<div class="c" style="left:211.20px;width:33.70px"><span>6(1)</span></div>
<div class="c m h" style="left:244.90px;width:36.80px"><span>FBFCCED2</span></div>
<div class="c d" style="left:281.70px;width:161.40px"><span>Routed:(1)-&gt;6 - (1)</span></div>
<div class="c" style="left:443.10px;width:134.60px"><span>NOP</span></div>
<div class="c m" style="left:577.70px;width:213.20px"><span>FBFCCED20181020E01101006006F</span></div>
<div class="c" style="left:790.90px;width:144.10px"></div>
</div>
<div class="row W G" style="top:293.380px">
<div class="c" style="left:0.00px;width:16.80px"><span>111</span></div>
<div class="c" style="left:16.80px;width:32.00px"><span>26.02.21</span></div>
<div class="c" style="left:48.80px;width:45.40px"><span>10:20:59.254</span></div>
<div class="c" style="left:94.20px;width:33.20px"><span>9.6Kbit/s</span></div>
<div class="c" style="left:127.40px;width:15.30px"><span>60</span></div>
<div class="c" style="left:142.70px;width:10.90px"><span>1</span></div>
<div class="c" style="left:153.60px;width:24.40px"><span>63</span></div>
<div class="c" style="left:178.00px;width:33.20px"><span>1</span></div>
<div class="c" style="left:211.20px;width:33.70px"><span>1</span></div>
<div class="c m h" style="left:244.90px;width:36.80px"><span>FBFCCED2</span></div>
<div class="c d" style="left:281.70px;width:161.40px"><span>Singlecast</span></div>
<div class="c" style="left:443.10px;width:134.60px"><span>NOP</span></div>
<div class="c m" style="left:577.70px;width:213.20px"><span>FBFCCED201410A0B0100A4</span></div>
<div class="c" style="left:790.90px;width:144.10px"></div>
</div>
<div class="row B R" style="top:303.850px">
<div class="c" style="left:0.00px;width:16.80px"><span>112</span></div>
<div class="c" style="left:16.80px;width:32.00px"><span>26.02.21</span></div>
<div class="c" style="left:48.80px;width:45.40px"><span>10:20:59.254</span></div>
<div class="c" style="left:94.20px;width:33.20px"><span>100KBit/</span></div>
<div class="c" style="left:127.40px;width:15.30px"><span>53</span></div>
<div class="c" style="left:142.70px;width:10.90px"><span>0</span></div>
<div class="c" style="left:153.60px;width:24.40px"><span>12</span></div>
<div class="c" style="left:178.00px;width:33.20px"><span>35(1)</span></div>
<div class="c" style="left:211.20px;width:33.70px"><span>1</span></div>
<div class="c m h" style="left:244.90px;width:36.80px"><span>FBFCCED2</span></div>
<div class="c d" style="left:281.70px;width:161.40px"><span>Routed:(1)&lt;-35 - (1)</span></div>
<div class="c" style="left:443.10px;width:134.60px"><span>Routed Error</span></div>
<div class="c m" style="left:577.70px;width:213.20px"><span>FBFCCED201C1020E01151F2396B1</span></div>
<div class="c" style="left:790.90px;width:144.10px"></div>
</div>
<div class="row B R" style="top:314.320px">
<div class="c" style="left:0.00px;width:16.80px"><span>112</span></div>
<div class="c" style="left:16.80px;width:32.00px"><span>26.02.21</span></div>
<div class="c" style="left:48.80px;width:45.40px"><span>10:20:59.267</span></div>
<div class="c" style="left:94.20px;width:33.20px"><span>100KBit/</span></div>
<div class="c" style="left:127.40px;width:15.30px"><span>53</span></div>
<div class="c" style="left:142.70px;width:10.90px"><span>0</span></div>
<div class="c" style="left:153.60px;width:24.40px"><span>12</span></div>
<div class="c" style="left:178.00px;width:33.20px"><span>35(1)</span></div>
<div class="c" style="left:211.20px;width:33.70px"><span>1</span></div>
<div class="c m h" style="left:244.90px;width:36.80px"><span>FBFCCED2</span></div>
<div class="c d" style="left:281.70px;width:161.40px"><span>Routed:(1)&lt;-35 - (1)</span></div>
<div class="c" style="left:443.10px;width:134.60px"><span>Routed Error</span></div>
<div class="c m" style="left:577.70px;width:213.20px"><span>FBFCCED201C1020E01151F2396B1</span></div>
<div class="c" style="left:790.90px;width:144.10px"></div>
</div>
<div class="row S G" style="top:324.790px">
<div class="c" style="left:0.00px;width:16.80px"><span>112</span></div>
<div class="c" style="left:16.80px;width:32.00px"><span>26.02.21</span></div>
<div class="c" style="left:48.80px;width:45.40px"><span>10:20:59.329</span></div>
<div class="c" style="left:94.20px;width:33.20px"><span>9.6Kbit/s</span></div>
<div class="c" style="left:127.40px;width:15.30px"><span>60</span></div>
<div class="c" style="left:142.70px;width:10.90px"><span>1</span></div>
<div class="c" style="left:153.60px;width:24.40px"><span>62</span></div>
<div class="c" style="left:178.00px;width:33.20px"><span>1</span></div>
<div class="c" style="left:211.20px;width:33.70px"><span>1</span></div>
<div class="c m h" style="left:244.90px;width:36.80px"><span>FBFCCED2</span></div>
<div class="c d" style="left:281.70px;width:161.40px"><span>Singlecast</span></div>
<div class="c" style="left:443.10px;width:134.60px"><span>NOP</span></div>
<div class="c m" style="left:577.70px;width:213.20px"><span>FBFCCED201410A0B0100A4</span></div>
<div class="c" style="left:790.90px;width:144.10px"></div>
</div>
<div class="row W G" style="top:335.260px">
<div class="c" style="left:0.00px;width:16.80px"><span>112</span></div>
<div class="c" style="left:16.80px;width:32.00px"><span>26.02.21</span></div>
<div class="c" style="left:48.80px;width:45.40px"><span>10:20:59.420</span></div>
<div class="c" style="left:94.20px;width:33.20px"><span>9.6Kbit/s</span></div>
<div class="c" style="left:127.40px;width:15.30px"><span>60</span></div>
<div class="c" style="left:142.70px;width:10.90px"><span>1</span></div>
<div class="c" style="left:153.60px;width:24.40px"><span>90</span></div>
<div class="c" style="left:178.00px;width:33.20px"><span>1</span></div>
<div class="c" style="left:211.20px;width:33.70px"><span>1</span></div>
<div class="c m h" style="left:244.90px;width:36.80px"><span>FBFCCED2</span></div>
<div class="c d" style="left:281.70px;width:161.40px"><span>Singlecast</span></div>
<div class="c" style="left:443.10px;width:134.60px"><span>NOP</span></div>
<div class="c m" style="left:577.70px;width:213.20px"><span>FBFCCED201410A0B0100A4</span></div>
<div class="c" style="left:790.90px;width:144.10px"></div>
</div>
<div class="row Y F" style="top:345.730px">
<div class="c" style="left:0.00px;width:16.80px"><span>112</span></div>
<div class="c" style="left:16.80px;width:32.00px"><span>26.02.21</span></div>
<div class="c" style="left:48.80px;width:45.40px"><span>10:20:59.494</span></div>
<div class="c" style="left:94.20px;width:33.20px"><span>40Kbit/s</span></div>
<div class="c" style="left:127.40px;width:15.30px"><span>56</span></div>
<div class="c" style="left:142.70px;width:10.90px"><span>1</span></div>
<div class="c" style="left:153.60px;width:24.40px"><span>73</span></div>
<div class="c" style="left:178.00px;width:33.20px"><span>1</span></div>
<div class="c" style="left:211.20px;width:33.70px"><span>1</span></div>
<div class="c m h" style="left:244.90px;width:36.80px"><span>FBFCCED2</span></div>
<div class="c d" style="left:281.70px;width:161.40px"><span>Explorer Normal</span></div>
<div class="c" style="left:443.10px;width:134.60px"><span>NOP</span></div>
<div class="c m" style="left:577.70px;width:213.20px"><span>FBFCCED201450313012000FA4000000000002B</span></div>
<div class="c" style="left:790.90px;width:144.10px"></div>
</div>
<div class="row Y F" style="top:356.200px">
<div class="c" style="left:0.00px;width:16.80px"><span>112</span></div>
<div class="c" style="left:16.80px;width:32.00px"><span>26.02.21</span></div>
<div class="c" style="left:48.80px;width:45.40px"><span>10:20:59.684</span></div>
<div class="c" style="left:94.20px;width:33.20px"><span>40Kbit/s</span></div>
<div class="c" style="left:127.40px;width:15.30px"><span>52</span></div>
<div class="c" style="left:142.70px;width:10.90px"><span>1</span></div>
<div class="c" style="left:153.60px;width:24.40px"><span>189</span></div>
<div class="c" style="left:178.00px;width:33.20px"><span>1</span></div>
<div class="c" style="left:211.20px;width:33.70px"><span>1</span></div>
<div class="c m h" style="left:244.90px;width:36.80px"><span>FBFCCED2</span></div>
<div class="c d" style="left:281.70px;width:161.40px"><span>Explorer Normal</span></div>
<div class="c" style="left:443.10px;width:134.60px"><span>NOP</span></div>
<div class="c m" style="left:577.70px;width:213.20px"><span>FBFCCED201450313012000FA31030000000059</span></div>
<div class="c" style="left:790.90px;width:144.10px"></div>
</div>
<div class="row Y F" style="top:366.670px">
<div class="c" style="left:0.00px;width:16.80px"><span>112</span></div>
<div class="c" style="left:16.80px;width:32.00px"><span>26.02.21</span></div>
<div class="c" style="left:48.80px;width:45.40px"><span>10:20:59.843</span></div>
<div class="c" style="left:94.20px;width:33.20px"><span>40Kbit/s</span></div>
<div class="c" style="left:127.40px;width:15.30px"><span>49</span></div>
<div class="c" style="left:142.70px;width:10.90px"><span>1</span></div>
<div class="c" style="left:153.60px;width:24.40px"><span>159</span></div>
<div class="c" style="left:178.00px;width:33.20px"><span>1</span></div>
<div class="c" style="left:211.20px;width:33.70px"><span>1</span></div>
<div class="c m h" style="left:244.90px;width:36.80px"><span>FBFCCED2</span></div>
<div class="c d" style="left:281.70px;width:161.40px"><span>Explorer Normal</span></div>
<div class="c" style="left:443.10px;width:134.60px"><span>NOP</span></div>
<div class="c m" style="left:577.70px;width:213.20px"><span>FBFCCED201450313012000FA3121000000007B</span></div>
<div class="c" style="left:790.90px;width:144.10px"></div>
</div>
<div class="row Y F" style="top:377.140px">
<div class="c" style="left:0.00px;width:16.80px"><span>112</span></div>
<div class="c" style="left:16.80px;width:32.00px"><span>26.02.21</span></div>
<div class="c" style="left:48.80px;width:45.40px"><span>10:20:59.865</span></div>
<div class="c" style="left:94.20px;width:33.20px"><span>40Kbit/s</span></div>
<div class="c" style="left:127.40px;width:15.30px"><span>49</span></div>
<div class="c" style="left:142.70px;width:10.90px"><span>1</span></div>
<div class="c" style="left:153.60px;width:24.40px"><span>21</span></div>
<div class="c" style="left:178.00px;width:33.20px"><span>1</span></div>
<div class="c" style="left:211.20px;width:33.70px"><span>1</span></div>
<div class="c m h" style="left:244.90px;width:36.80px"><span>FBFCCED2</span></div>
<div class="c d" style="left:281.70px;width:161.40px"><span>Explorer Normal</span></div>
<div class="c" style="left:443.10px;width:134.60px"><span>NOP</span></div>
<div class="c m" style="left:577.70px;width:213.20px"><span>FBFCCED201450313012000FA31230000000079</span></div>
<div class="c" style="left:790.90px;width:144.10px"></div>
</div>
<div class="row Y F" style="top:387.610px">
<div class="c" style="left:0.00px;width:16.80px"><span>112</span></div>
<div class="c" style="left:16.80px;width:32.00px"><span>26.02.21</span></div>
<div class="c" style="left:48.80px;width:45.40px"><span>10:20:59.883</span></div>
<div class="c" style="left:94.20px;width:33.20px"><span>40Kbit/s</span></div>
<div class="c" style="left:127.40px;width:15.30px"><span>45</span></div>
<div class="c" style="left:142.70px;width:10.90px"><span>1</span></div>
<div class="c" style="left:153.60px;width:24.40px"><span>18</span></div>
<div class="c" style="left:178.00px;width:33.20px"><span>1</span></div>
<div class="c" style="left:211.20px;width:33.70px"><span>1</span></div>
<div class="c m h" style="left:244.90px;width:36.80px"><span>FBFCCED2</span></div>
<div class="c d" style="left:281.70px;width:161.40px"><span>Explorer Normal</span></div>
<div class="c" style="left:443.10px;width:134.60px"><span>NOP</span></div>
<div class="c m" style="left:577.70px;width:213.20px"><span>FBFCCED201450313012000FA310B0000000051</span></div>
<div class="c" style="left:790.90px;width:144.10px"></div>
</div>
<div class="row Y F" style="top:398.080px">
<div class="c" style="left:0.00px;width:16.80px"><span>112</span></div>
<div class="c" style="left:16.80px;width:32.00px"><span>26.02.21</span></div>
<div class="c" style="left:48.80px;width:45.40px"><span>10:20:59.914</span></div>
<div class="c" style="left:94.20px;width:33.20px"><span>40Kbit/s</span></div>
<div class="c" style="left:127.40px;width:15.30px"><span>53</span></div>
<div class="c" style="left:142.70px;width:10.90px"><span>1</span></div>
<div class="c" style="left:153.60px;width:24.40px"><span>30</span></div>
<div class="c" style="left:178.00px;width:33.20px"><span>1</span></div>
<div class="c" style="left:211.20px;width:33.70px"><span>1</span></div>
<div class="c m h" style="left:244.90px;width:36.80px"><span>FBFCCED2</span></div>
<div class="c d" style="left:281.70px;width:161.40px"><span>Explorer Normal</span></div>
<div class="c" style="left:443.10px;width:134.60px"><span>NOP</span></div>
<div class="c m" style="left:577.70px;width:213.20px"><span>FBFCCED201450313012000FA31020000000058</span></div>
<div class="c" style="left:790.90px;width:144.10px"></div>
</div>
<div class="row Y F" style="top:408.550px">
<div class="c" style="left:0.00px;width:16.80px"><span>113</span></div>
<div class="c" style="left:16.80px;width:32.00px"><span>26.02.21</span></div>
<div class="c" style="left:48.80px;width:45.40px"><span>10:20:59.976</span></div>
<div class="c" style="left:94.20px;width:33.20px"><span>40Kbit/s</span></div>
<div class="c" style="left:127.40px;width:15.30px"><span>49</span></div>
<div class="c" style="left:142.70px;width:10.90px"><span>1</span></div>
<div class="c" style="left:153.60px;width:24.40px"><span>62</span></div>
<div class="c" style="left:178.00px;width:33.20px"><span>1</span></div>
<div class="c" style="left:211.20px;width:33.70px"><span>1</span></div>
<div class="c m h" style="left:244.90px;width:36.80px"><span>FBFCCED2</span></div>
<div class="c d" style="left:281.70px;width:161.40px"><span>Explorer Normal</span></div>
<div class="c" style="left:443.10px;width:134.60px"><span>NOP</span></div>
<div class="c m" style="left:577.70px;width:213.20px"><span>FBFCCED201450313012000FA3106000000005C</span></div>
<div class="c" style="left:790.90px;width:144.10px"></div>
</div>
<div class="row Y F" style="top:419.020px">
<div class="c" style="left:0.00px;width:16.80px"><span>113</span></div>
<div class="c" style="left:16.80px;width:32.00px"><span>26.02.21</span></div>
<div class="c" style="left:48.80px;width:45.40px"><span>10:21:00.041</span></div>
<div class="c" style="left:94.20px;width:33.20px"><span>40Kbit/s</span></div>
<div class="c" style="left:127.40px;width:15.30px"><span>56</span></div>
<div class="c" style="left:142.70px;width:10.90px"><span>1</span></div>
<div class="c" style="left:153.60px;width:24.40px"><span>65</span></div>
<div class="c" style="left:178.00px;width:33.20px"><span>1</span></div>
<div class="c" style="left:211.20px;width:33.70px"><span>1</span></div>
<div class="c m h" style="left:244.90px;width:36.80px"><span>FBFCCED2</span></div>
<div class="c d" style="left:281.70px;width:161.40px"><span>Explorer Normal</span></div>
<div class="c" style="left:443.10px;width:134.60px"><span>NOP</span></div>
<div class="c m" style="left:577.70px;width:213.20px"><span>FBFCCED201450313012000FA3115000000004F</span></div>
<div class="c" style="left:790.90px;width:144.10px"></div>
</div>
<div class="row Y F" style="top:429.490px">
<div class="c" style="left:0.00px;width:16.80px"><span>113</span></div>
<div class="c" style="left:16.80px;width:32.00px"><span>26.02.21</span></div>
<div class="c" style="left:48.80px;width:45.40px"><span>10:21:00.163</span></div>
<div class="c" style="left:94.20px;width:33.20px"><span>40Kbit/s</span></div>
<div class="c" style="left:127.40px;width:15.30px"><span>48</span></div>
<div class="c" style="left:142.70px;width:10.90px"><span>1</span></div>
<div class="c" style="left:153.60px;width:24.40px"><span>121</span></div>
<div class="c" style="left:178.00px;width:33.20px"><span>1</span></div>
<div class="c" style="left:211.20px;width:33.70px"><span>1</span></div>
<div class="c m h" style="left:244.90px;width:36.80px"><span>FBFCCED2</span></div>
<div class="c d" style="left:281.70px;width:161.40px"><span>Explorer Normal</span></div>
<div class="c" style="left:443.10px;width:134.60px"><span>NOP</span></div>
<div class="c m" style="left:577.70px;width:213.20px"><span>FBFCCED201450313012000FA2203100000005A</span></div>
<div class="c" style="left:790.90px;width:144.10px"></div>
</div>
<div class="row Y F" style="top:439.960px">
<div class="c" style="left:0.00px;width:16.80px"><span>113</span></div>
<div class="c" style="left:16.80px;width:32.00px"><span>26.02.21</span></div>
<div class="c" style="left:48.80px;width:45.40px"><span>10:21:00.299</span></div>
<div class="c" style="left:94.20px;width:33.20px"><span>40Kbit/s</span></div>
<div class="c" style="left:127.40px;width:15.30px"><span>56</span></div>
<div class="c" style="left:142.70px;width:10.90px"><span>1</span></div>
<div class="c" style="left:153.60px;width:24.40px"><span>136</span></div>
<div class="c" style="left:178.00px;width:33.20px"><span>1</span></div>
<div class="c" style="left:211.20px;width:33.70px"><span>1</span></div>
<div class="c m h" style="left:244.90px;width:36.80px"><span>FBFCCED2</span></div>
<div class="c d" style="left:281.70px;width:161.40px"><span>Explorer Normal</span></div>
<div class="c" style="left:443.10px;width:134.60px"><span>NOP</span></div>
<div class="c m" style="left:577.70px;width:213.20px"><span>FBFCCED201450313012000FA22030D00000047</span></div>
<div class="c" style="left:790.90px;width:144.10px"></div>
</div>
</div>
<div class="a" style="left:1017.5px;top:30px;width:6.5px;height:554px;background:#fff"></div>
<div class="a" style="left:1017.6px;top:436.8px;width:6.4px;height:104.2px;background:#7aaccb"></div>
<div class="a" style="left:82.5px;top:449.5px;width:935px;height:2.5px;background:#fff"></div>
<div class="a" style="left:82.5px;top:452px;width:935px;height:2px;background:#62a1c9"></div>
<div class="det">
</div>
<div class="a" style="left:243px;top:454px;width:1px;height:130px;background:#e4e4e4"></div>
<div class="a" style="left:379.2px;top:454px;width:1px;height:130px;background:#e4e4e4"></div>
<div class="dt b" style="left:84.4px;top:456.5px">Singlecast</div>
<div class="dt" style="left:94.8px;top:467.4px">Home ID:</div><div class="dt" style="left:198.4px;top:467.4px;letter-spacing:-0.3px">FB FC CE D2</div>
<div class="dt" style="left:94.8px;top:478.3px">Source Node ID:</div><div class="dt" style="left:199px;top:478.3px">1</div>
<div class="a" style="left:86.6px;top:493.4px;width:0;height:0;border-left:2.2px solid transparent;border-right:2.2px solid transparent;border-top:2.9px solid #1b6a9c"></div>
<div class="dt" style="left:94.8px;top:489.2px">Properties1:</div>
<div class="dt" style="left:99.5px;top:500.1px">Header Type:</div><div class="dt" style="left:202.7px;top:500.1px">0x01</div>
<div class="dt" style="left:99.5px;top:511px">Speed Modified:</div><div class="dt" style="left:202.7px;top:511px">false</div>
<div class="dt" style="left:99.5px;top:521.9px">Low Power:</div><div class="dt" style="left:202.7px;top:521.9px">false</div>
<div class="dt" style="left:99.5px;top:532.8px">Ack:</div><div class="dt" style="left:202.7px;top:532.8px">true</div>
<div class="dt" style="left:99.5px;top:543.7px">Routed:</div><div class="dt" style="left:202.7px;top:543.7px">false</div>
<div class="a" style="left:86.6px;top:559.6px;width:0;height:0;border-left:2.2px solid transparent;border-right:2.2px solid transparent;border-top:2.9px solid #1b6a9c"></div>
<div class="dt" style="left:94.8px;top:554.6px">Properties2:</div>
<div class="dt" style="left:99.5px;top:565.5px">Sequence Number:</div><div class="dt" style="left:202.7px;top:565.5px">10</div>
<div class="dt" style="left:99.5px;top:576.4px">Reserved:</div><div class="dt" style="left:202.7px;top:576.4px">false</div>
<div class="dt b" style="left:245px;top:456.5px">Command Class 0x00 not found <span style="font-weight:normal;color:#444;margin-left:1px">ver.0</span></div>
<div class="dt b" style="left:245px;top:467.4px">N/A</div>
<div class="dt" style="left:256px;top:478.3px">Hex Data: 0x00</div>

</body></html>
